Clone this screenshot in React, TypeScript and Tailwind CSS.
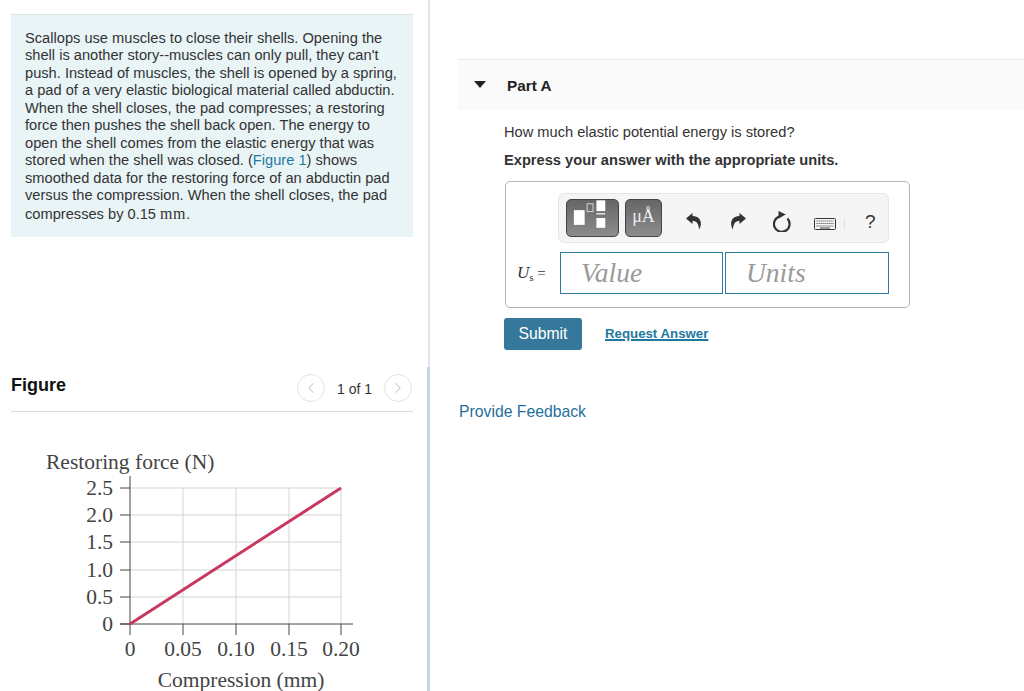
import React from 'react';
import { ChevronLeft, ChevronRight } from 'lucide-react';

const yTicks = [
  { label: '2.5', y: 48 },
  { label: '2.0', y: 75 },
  { label: '1.5', y: 102 },
  { label: '1.0', y: 130 },
  { label: '0.5', y: 157 },
  { label: '0', y: 184 },
];

const xTicks = [
  { label: '0', x: 130 },
  { label: '0.05', x: 183 },
  { label: '0.10', x: 236 },
  { label: '0.15', x: 289 },
  { label: '0.20', x: 341 },
];

function ForceChart() {
  return (
    <svg width="380" height="251" viewBox="0 0 380 251" className="block" style={{ fontFamily: '"Liberation Serif", serif' }}>
      <text x="46" y="29" fontSize="21.5" fill="#444">Restoring force (N)</text>
      {yTicks.slice(0, 5).map((t) => (
        <line key={t.label} x1="130" x2="341" y1={t.y} y2={t.y} stroke="#d4d4d4" strokeWidth="1" />
      ))}
      {xTicks.slice(1).map((t) => (
        <line key={t.label} x1={t.x} x2={t.x} y1="48" y2="184" stroke="#d4d4d4" strokeWidth="1" />
      ))}
      <line x1="130" x2="130" y1="36" y2="184" stroke="#444" />
      <line x1="120" x2="353" y1="184" y2="184" stroke="#444" />
      {yTicks.map((t) => (
        <g key={t.label}>
          <line x1="120" x2="130" y1={t.y} y2={t.y} stroke="#444" />
          <text x="113" y={t.y + 7} fontSize="21.5" fill="#444" textAnchor="end">{t.label}</text>
        </g>
      ))}
      {xTicks.map((t) => (
        <g key={t.label}>
          <line x1={t.x} x2={t.x} y1="184" y2="195" stroke="#444" />
          <text x={t.x} y="216" fontSize="21.5" fill="#444" textAnchor="middle">{t.label}</text>
        </g>
      ))}
      <line x1="130" y1="184" x2="341" y2="48" stroke="#c9385f" strokeWidth="3" />
      <text x="241" y="247" fontSize="21.5" fill="#444" textAnchor="middle">Compression (mm)</text>
    </svg>
  );
}

function TemplatesIcon() {
  return (
    <svg width="52" height="36" viewBox="0 0 52 36">
      <rect x="7" y="10" width="11" height="15" fill="#fff" />
      <rect x="20.5" y="3.5" width="6" height="8" fill="none" stroke="#d8d8d8" strokeWidth="1" />
      <rect x="30" y="0" width="9" height="11" fill="#fff" />
      <rect x="30" y="13" width="9" height="1.5" fill="#e8e8e8" />
      <rect x="30" y="18" width="9" height="10" fill="#fff" />
    </svg>
  );
}

function UndoIcon({ flip }: { flip?: boolean }) {
  return (
    <svg width="16" height="17" viewBox="0 0 16 17" className={flip ? '-scale-x-100' : ''}>
      <path d="M6.5 0 L0 5.5 L6.5 11 V8 C10.5 8 12.8 10.5 13 16.5 C16 12.5 16.5 3.5 6.5 3 Z" fill="#333" />
    </svg>
  );
}

function ResetIcon() {
  return (
    <svg width="19" height="22" viewBox="0 0 19 22" fill="none" className="block">
      <path d="M7 6.4 A7.8 7.8 0 1 0 14.4 8.6" stroke="#333" strokeWidth="2.2" />
      <path d="M5.5 1 L12.8 4.6 L5.5 8.6 Z" fill="#333" />
    </svg>
  );
}

function KeyboardIcon() {
  return (
    <svg width="22" height="12" viewBox="0 0 22 12" className="block">
      <rect x="0.5" y="0.5" width="21" height="11" rx="1" fill="#f5f5f5" stroke="#333" />
      <path d="M2.5 3H19.5M2.5 5.5H19.5M2.5 8H19.5" stroke="#555" strokeWidth="1.2" strokeDasharray="1.2 0.8" />
      <path d="M6 10H16" stroke="#444" strokeWidth="1" />
    </svg>
  );
}

export default function App() {
  return (
    <div className="flex h-[691px] w-[1024px] overflow-hidden bg-white font-['Liberation_Sans',Arial,sans-serif] text-[#333]">
      <div className="w-[427px] shrink-0 pl-[11px] pr-[14px] pt-[14px]">
        <div className="h-[223px] border-t border-[#dfe5e7] bg-[#e9f4f7] pl-[14px] pr-[10px] pt-[14.5px] text-[14.65px] leading-[17.5px] text-[#333]">
          Scallops use muscles to close their shells. Opening the
          <br />shell is another story--muscles can only pull, they can't
          <br />push. Instead of muscles, the shell is opened by a spring,
          <br />a pad of a very elastic biological material called abductin.
          <br />When the shell closes, the pad compresses; a restoring
          <br />force then pushes the shell back open. The energy to
          <br />open the shell comes from the elastic energy that was
          <br />stored when the shell was closed. (<span className="text-[#1f7a9f]">Figure 1</span>) shows
          <br />smoothed data for the restoring force of an abductin pad
          <br />versus the compression. When the shell closes, the pad
          <br />compresses by 0.15 <span className="font-['Liberation_Serif',serif] text-[16px] tracking-[0.5px]">mm</span>.
        </div>

        <div className="mt-[137px] flex h-[38px] items-start justify-between border-b border-[#dcdcdc]">
          <span className="text-[18px] font-bold leading-[22px] text-[#111]">Figure</span>
          <div className="mr-[1px] flex items-center gap-[12px]">
            <span className="flex h-[28px] w-[28px] items-center justify-center rounded-full border border-[#e3e3e3]">
              <ChevronLeft className="h-[18px] w-[18px] text-[#b5b5b5]" strokeWidth={1.25} />
            </span>
            <span className="mt-[2px] text-[14px] text-[#333]">1 of 1</span>
            <span className="flex h-[28px] w-[28px] items-center justify-center rounded-full border border-[#e3e3e3]">
              <ChevronRight className="h-[18px] w-[18px] text-[#b5b5b5]" strokeWidth={1.25} />
            </span>
          </div>
        </div>

        <div className="-ml-[11px] mt-[28px]">
          <ForceChart />
        </div>
      </div>

      <div className="flex w-[3px] shrink-0 flex-col items-end">
        <div className="h-[367px] w-[2px] bg-[#dfe6f2]" />
        <div className="w-[3px] flex-1 bg-[#c6d3e6]" />
      </div>

      <div className="flex-1 pl-[28px] pt-[59px]">
        <div className="flex h-[51px] items-center border-t border-[#e8e8e8] bg-[#fafafa]">
          <svg width="12" height="7" viewBox="0 0 12 7" className="ml-[16px] -mt-[1px]">
            <path d="M0 0H12L6 7Z" fill="#222" />
          </svg>
          <span className="ml-[21px] mt-[2px] text-[15.3px] font-bold text-[#222]">Part A</span>
        </div>

        <div className="pl-[46px]">
          <p className="mt-[14px] text-[14.65px] leading-[17px] text-[#333]">How much elastic potential energy is stored?</p>
          <p className="mt-[11px] text-[14.65px] font-bold leading-[17px] text-[#333]">Express your answer with the appropriate units.</p>

          <div className="ml-[1px] mt-[12px] h-[127px] w-[405px] rounded-[5px] border border-[#b4b4b4] pl-[11px] pt-[11px]">
            <div className="ml-[41px] flex h-[50px] w-[331px] items-center rounded-[6px] border border-[#e6e6e6] bg-[#f5f5f5] pl-[7px]">
              <div className="flex h-[38px] w-[53px] items-center justify-center rounded-[5px] border border-[#444] bg-gradient-to-b from-[#666] to-[#8c8c8c]">
                <TemplatesIcon />
              </div>
              <div className="ml-[6px] flex h-[38px] w-[37px] items-center justify-center rounded-[5px] border border-[#444] bg-gradient-to-b from-[#666] to-[#8c8c8c] pb-[4px] font-['Liberation_Serif',serif] text-[18px] text-[#eee]">
                μÅ
              </div>
              <span className="ml-[24px] mt-[7px]"><UndoIcon /></span>
              <span className="ml-[28px] mt-[7px]"><UndoIcon flip /></span>
              <span className="ml-[27px] mt-[6px]"><ResetIcon /></span>
              <span className="ml-[22px] mt-[12px]"><KeyboardIcon /></span>
              <span className="ml-[8px] mt-[12px] h-[10px] w-px bg-[#ddd]" />
              <span className="ml-[20px] mt-[7px] text-[19px] leading-[20px] text-[#333]">?</span>
            </div>

            <div className="mt-[9px] flex items-center">
              <span className="w-[43px] shrink-0 whitespace-nowrap font-['Liberation_Serif',serif] text-[15px] text-[#333]">
                <i className="text-[17px]">U</i><span className="relative top-[3px] text-[11px]">s</span> =
              </span>
              <div className="flex h-[42px] w-[163px] items-center border border-[#2f7a9e] pl-[20px] font-['Liberation_Serif',serif] text-[27.5px] italic text-[#9a9a9a]">Value</div>
              <div className="ml-[2px] flex h-[42px] w-[164px] items-center border border-[#2f7a9e] pl-[20px] font-['Liberation_Serif',serif] text-[27.5px] italic text-[#9a9a9a]">Units</div>
            </div>
          </div>

          <div className="mt-[10px] flex items-center">
            <button className="h-[32px] w-[78px] rounded-[3px] bg-[#35789b] text-[15.7px] text-white">Submit</button>
            <a className="ml-[23px] text-[13.25px] font-bold text-[#1f7a9f] underline decoration-2">Request Answer</a>
          </div>
        </div>

        <a className="ml-[1px] mt-[52px] block text-[15.75px] leading-[20px] text-[#1f6f9c]">Provide Feedback</a>
      </div>
    </div>
  );
}
